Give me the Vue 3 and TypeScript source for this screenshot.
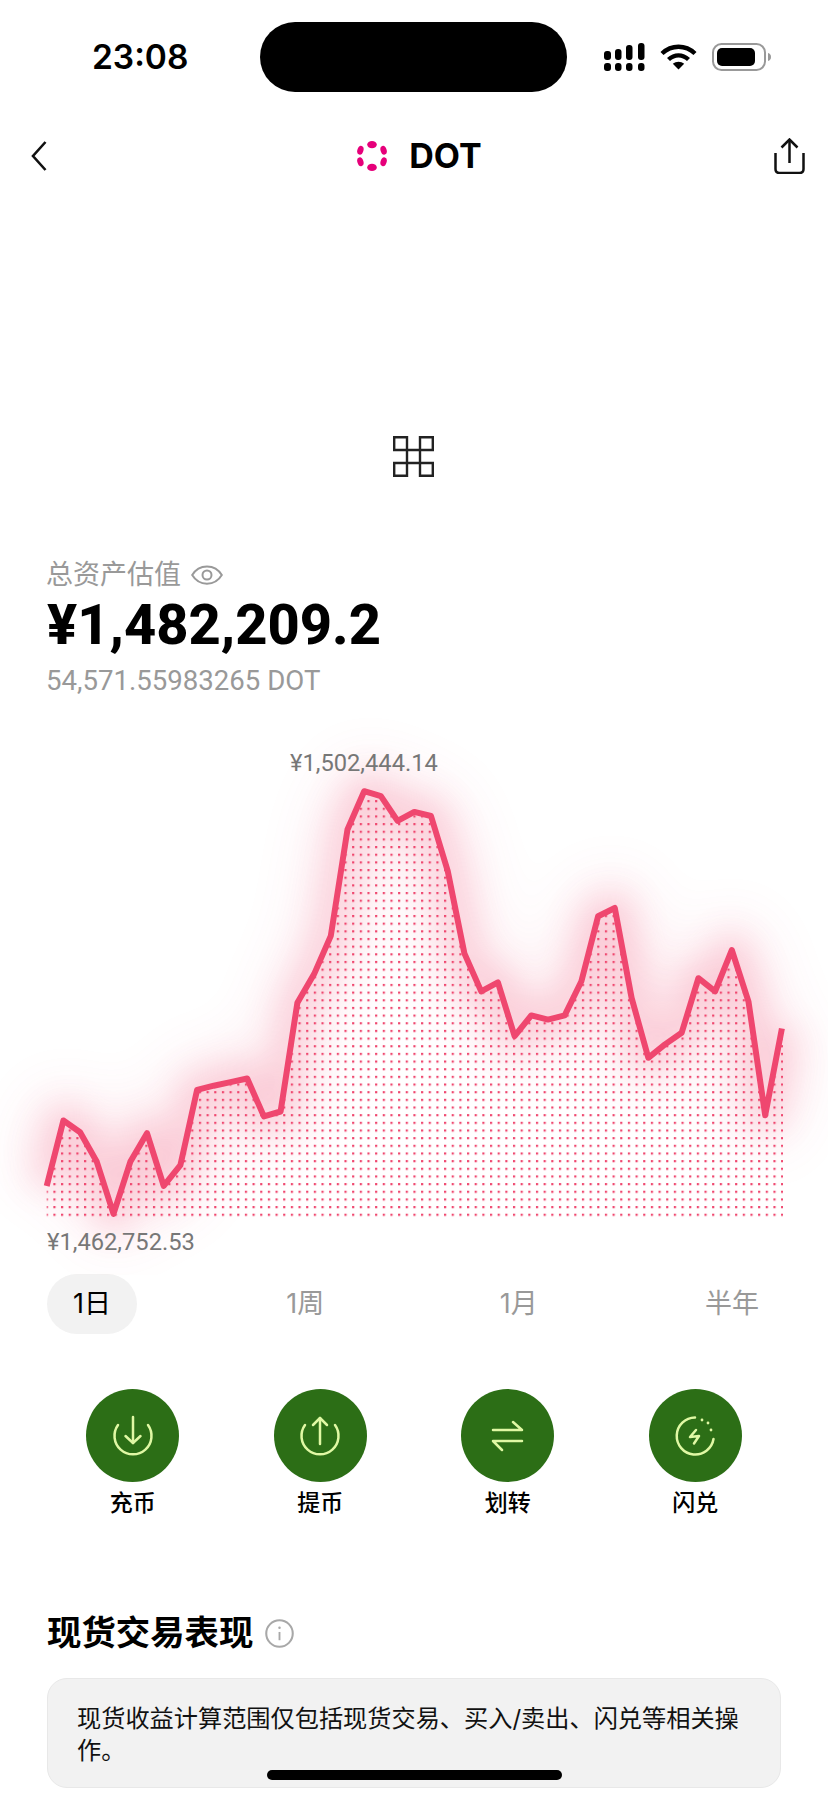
<script setup lang="ts">
type Action = {
  label: string
  paths: string[]
  dots?: [number, number][]
}

const tabs = ['1日', '1周', '1月', '半年']

const actions: Action[] = [
  {
    label: '充币',
    paths: ['M-15 -11A18.5 18.5 0 1 0 15 -11', 'M0 -19V7', 'M-7.5 0L0 7L7.5 0'],
  },
  {
    label: '提币',
    paths: ['M-15 -11A18.5 18.5 0 1 0 15 -11', 'M0 8V-18', 'M-7 -11L0 -18L7 -11'],
  },
  {
    label: '划转',
    paths: ['M-15 -6H14L5 -14', 'M14 5H-15L-6 14'],
  },
  {
    label: '闪兑',
    paths: ['M0 -18.5A18.5 18.5 0 1 0 18.5 3', 'M1 -6L-5 1L4 0L-1 7.5'],
    dots: [[7, -16], [13, -13], [16, -6]],
  },
]

// chart values in page pixels
const prices = [
  1184.9, 1119.5, 1131.2, 1160.8, 1212.8, 1160.8, 1132.2, 1184.9, 1164.2, 1088.8, 1084.7, 1081.1,
  1077.5, 1115.4, 1110.5, 1001.7, 973.1, 934.9, 828.5, 790.2, 795.1, 819.9, 810.9, 815, 869.8,
  952.4, 990.4, 981.4, 1035.1, 1014.4, 1018.6, 1014.4, 980.3, 915.3, 907, 996.9, 1056.8, 1043.4,
  1031.7, 977.2, 990.4, 949, 1000.7, 1114.3, 1027.5,
]

const coords = prices.map((y, i) => `${(46.7 + i * 16.71).toFixed(1)},${y}`)
const linePoints = coords.join(' ')
const areaPoints = `46.7,1216 ${linePoints} 783,1027.5 783,1216`
</script>

<template>
  <div class="page">
    <div class="status">
      <span class="time">23:08</span>
      <div class="island"></div>
      <div class="status-icons">
        <svg width="41" height="28" viewBox="0 0 41 28" fill="#000">
          <rect x="0" y="8" width="7" height="9" rx="3" />
          <rect x="11" y="6" width="6.5" height="11" rx="3" />
          <rect x="22" y="2" width="6.5" height="15" rx="3" />
          <rect x="34" y="0" width="6.5" height="17" rx="3" />
          <rect x="0" y="20" width="7" height="8" rx="3" />
          <rect x="11" y="20" width="6.5" height="8" rx="3" />
          <rect x="22" y="20" width="6.5" height="8" rx="3" />
          <rect x="34" y="20" width="6.5" height="8" rx="3" />
        </svg>
        <svg class="wifi" width="37" height="26" viewBox="0 0 37 26" fill="none" stroke="#000" stroke-width="4.4">
          <path d="M2 9.5C11.5 .5 25.5 .5 35 9.5" />
          <path d="M8.5 15.5C14.5 10 22.5 10 28.5 15.5" />
          <path d="M18.5 25.5L12.8 19.8C16 17 21 17 24.2 19.8Z" fill="#000" stroke="none" />
        </svg>
        <svg class="battery" width="60" height="28" viewBox="0 0 60 28">
          <rect x="1" y="1" width="52" height="26" rx="8.5" fill="none" stroke="#999" stroke-width="2" />
          <rect x="5" y="5" width="38" height="18" rx="5" fill="#000" />
          <path d="M56 10C58 10.5 59 12 59 14S58 17.500 56 18Z" fill="#999" />
        </svg>
      </div>
    </div>

    <div class="nav">
      <svg class="back" width="16" height="30" viewBox="0 0 16 30" fill="none" stroke="#111" stroke-width="2.6">
        <path d="M14.500 1L2 15L14.500 29" />
      </svg>
      <div class="coin">
        <svg width="30" height="30" viewBox="0 0 30 30" fill="#e6007a">
          <ellipse cx="15" cy="3.600" rx="4.800" ry="3.600" />
          <ellipse cx="15" cy="26.400" rx="4.800" ry="3.600" />
          <ellipse cx="3.400" cy="9.300" rx="3" ry="4.500" transform="rotate(18 3.400 9.300)" />
          <ellipse cx="26.600" cy="9.300" rx="3" ry="4.500" transform="rotate(-18 26.600 9.300)" />
          <ellipse cx="3.400" cy="20.700" rx="3" ry="4.500" transform="rotate(-18 3.400 20.700)" />
          <ellipse cx="26.600" cy="20.700" rx="3" ry="4.500" transform="rotate(18 26.600 20.700)" />
        </svg>
        <span>DOT</span>
      </div>
      <svg class="share" width="31" height="36" viewBox="0 0 31 36" fill="none" stroke="#111" stroke-width="2.500">
        <path d="M15.500 25V2" />
        <path d="M7.500 9.500L15.500 1.500L23.500 9.500" />
        <path d="M1.500 15V31C1.500 33.500 3 35 5.500 35H25.500C28 35 29.500 33.500 29.500 31V15" />
      </svg>
    </div>

    <div class="cmd">
      <svg width="41" height="41" viewBox="0 0 41 41" fill="none" stroke="#222" stroke-width="2.400">
        <path d="M14 14H1.200V1.200H14V39.800H1.200V27H39.800V39.800H27V1.200H39.800V14H14" />
      </svg>
    </div>

    <div class="summary">
      <div class="summary-label">
        <span>总资产估值</span>
        <svg width="32" height="22" viewBox="0 0 32 22" fill="none" stroke="#999" stroke-width="2">
          <path d="M1.200 11C8 -.5 24 -.5 30.800 11C24 22.500 8 22.500 1.200 11Z" />
          <circle cx="16" cy="11" r="4.500" />
        </svg>
      </div>
      <div class="amount">¥1,482,209.2</div>
      <div class="holding">54,571.55983265 DOT</div>
    </div>

    <div class="chart">
      <svg width="828" height="579" viewBox="0 695 828 579">
        <defs>
          <pattern id="dots" x="45.700" y="1212.700" width="7.660" height="7.660" patternUnits="userSpaceOnUse">
            <rect width="2.200" height="2.200" fill="#ef476f" />
          </pattern>
          <filter id="glow-wide" x="-20%" y="-30%" width="140%" height="160%">
            <feGaussianBlur stdDeviation="30" />
          </filter>
          <filter id="glow" x="-20%" y="-30%" width="140%" height="160%">
            <feGaussianBlur stdDeviation="17" />
          </filter>
        </defs>
        <polyline :points="linePoints" fill="none" stroke="#ef476f" stroke-width="60" stroke-linejoin="round" opacity="0.1" filter="url(#glow-wide)" />
        <polyline :points="linePoints" fill="none" stroke="#ef476f" stroke-width="34" stroke-linejoin="round" opacity="0.2" filter="url(#glow)" />
        <polygon :points="areaPoints" fill="url(#dots)" />
        <polyline :points="linePoints" fill="none" stroke="#ef476f" stroke-width="6" stroke-linejoin="round" />
      </svg>
      <span class="chart-high">¥1,502,444.14</span>
      <span class="chart-low">¥1,462,752.53</span>
    </div>

    <div class="tabs">
      <div v-for="(tab, idx) in tabs" :key="tab" class="tab" :class="{ 'is-active': idx === 0 }">
        {{ tab }}
      </div>
    </div>

    <div class="actions">
      <div v-for="action in actions" :key="action.label" class="action">
        <div class="action-circle">
          <svg width="48" height="48" viewBox="-24 -24 48 48" fill="none" stroke="#e0f8a4" stroke-width="2.500" stroke-linecap="round" stroke-linejoin="round">
            <path v-for="d in action.paths" :key="d" :d="d" />
            <circle v-for="dot in action.dots" :key="dot[0]" :cx="dot[0]" :cy="dot[1]" r="1.400" fill="#e0f8a4" stroke="none" />
          </svg>
        </div>
        <span>{{ action.label }}</span>
      </div>
    </div>

    <div class="section-title">
      <h2>现货交易表现</h2>
      <svg width="29" height="29" viewBox="0 0 28 28" fill="none" stroke="#a8a8a8" stroke-width="2">
        <circle cx="14" cy="14" r="12.800" />
        <path d="M14 12.500V20.500" stroke-width="1.800" />
        <circle cx="14" cy="8.500" r="1.200" fill="#a8a8a8" stroke="none" />
      </svg>
    </div>

    <div class="note">现货收益计算范围仅包括现货交易、买入/卖出、闪兑等相关操作。</div>

    <div class="home-bar"></div>
  </div>
</template>

<style scoped>
.page {
  position: relative;
  width: 828px;
  height: 1795px;
  overflow: hidden;
  background: #fff;
  color: #000;
  font-family: Inter, "Noto Sans CJK SC", sans-serif;
}

.status {
  display: flex;
  align-items: center;
  height: 70px;
  padding: 22px 0 0 92px;
}

.time {
  width: 168px;
  font-size: 33.5px;
  font-weight: 600;
}

.island {
  width: 307px;
  height: 70px;
  border-radius: 35px;
  background: #000;
}

.status-icons {
  display: flex;
  align-items: center;
  gap: 15px;
  margin-left: 37px;
}

.nav {
  display: grid;
  grid-template-columns: 1fr auto 1fr;
  align-items: center;
  height: 36px;
  margin-top: 46px;
  padding: 0 23px 0 31px;
}

.coin {
  display: flex;
  align-items: center;
  gap: 22px;
  height: 36px;
  font-size: 34px;
  font-weight: 700;
  line-height: 36px;
}

.coin svg {
  margin-left: 3px;
}

.share {
  justify-self: end;
}

.cmd {
  display: flex;
  justify-content: center;
  height: 41px;
  margin-top: 262px;
  padding-right: 1px;
}

.summary {
  padding-left: 47px;
}

.summary-label {
  display: flex;
  align-items: center;
  gap: 10px;
  margin-top: 83px;
  margin-left: -1px;
  font-size: 27px;
  line-height: 30px;
  color: #999;
}

.amount {
  margin-top: 3px;
  font-family: Roboto, "Noto Sans CJK SC", sans-serif;
  font-size: 56px;
  font-weight: 800;
  line-height: 64px;
}

.holding {
  margin-top: 9px;
  margin-left: -1px;
  font-family: Roboto, sans-serif;
  font-size: 27.600px;
  line-height: 30px;
  color: #999;
}

.chart {
  position: relative;
  height: 578px;
}

.chart svg {
  display: block;
}

.chart-high,
.chart-low {
  position: absolute;
  font-family: Roboto, sans-serif;
  font-size: 23.700px;
  line-height: 28px;
  color: #777;
}

.chart-high {
  top: 53px;
  left: 290px;
}

.chart-low {
  top: 532px;
  left: 47px;
}

.tabs {
  display: flex;
  justify-content: space-between;
  height: 60px;
  padding: 0 51px 0 47px;
}

.tab {
  display: flex;
  align-items: center;
  justify-content: center;
  box-sizing: border-box;
  width: 90px;
  padding-bottom: 6px;
  border-radius: 30px;
  font-size: 27px;
  color: #999;
}

.tab.is-active {
  background: #f2f2f2;
  color: #000;
}

.actions {
  display: grid;
  grid-template-columns: repeat(4, 1fr);
  margin-top: 55px;
  padding: 0 39px;
}

.action {
  display: flex;
  flex-direction: column;
  align-items: center;
  gap: 6px;
  margin-bottom: 2px;
  font-size: 23px;
  font-weight: 500;
  line-height: 30px;
}

.action-circle {
  display: flex;
  align-items: center;
  justify-content: center;
  width: 93px;
  height: 93px;
  border-radius: 50%;
  background: #2c6e16;
}

.section-title {
  display: flex;
  align-items: center;
  gap: 12px;
  height: 40px;
  margin-top: 93px;
  padding-left: 47px;
}

.section-title h2 {
  margin: 0;
  font-size: 34.400px;
  font-weight: 700;
  line-height: 40px;
}

.note {
  box-sizing: border-box;
  height: 110px;
  margin: 25px 47px 0;
  padding: 24px 30px 0 29px;
  border: 1px solid #e8e8e8;
  border-radius: 20px;
  background: #f2f2f2;
  font-size: 24.200px;
  line-height: 32px;
  color: #111;
}

.home-bar {
  position: absolute;
  left: 267px;
  bottom: 15px;
  width: 295px;
  height: 10px;
  border-radius: 5px;
  background: #000;
}
</style>
